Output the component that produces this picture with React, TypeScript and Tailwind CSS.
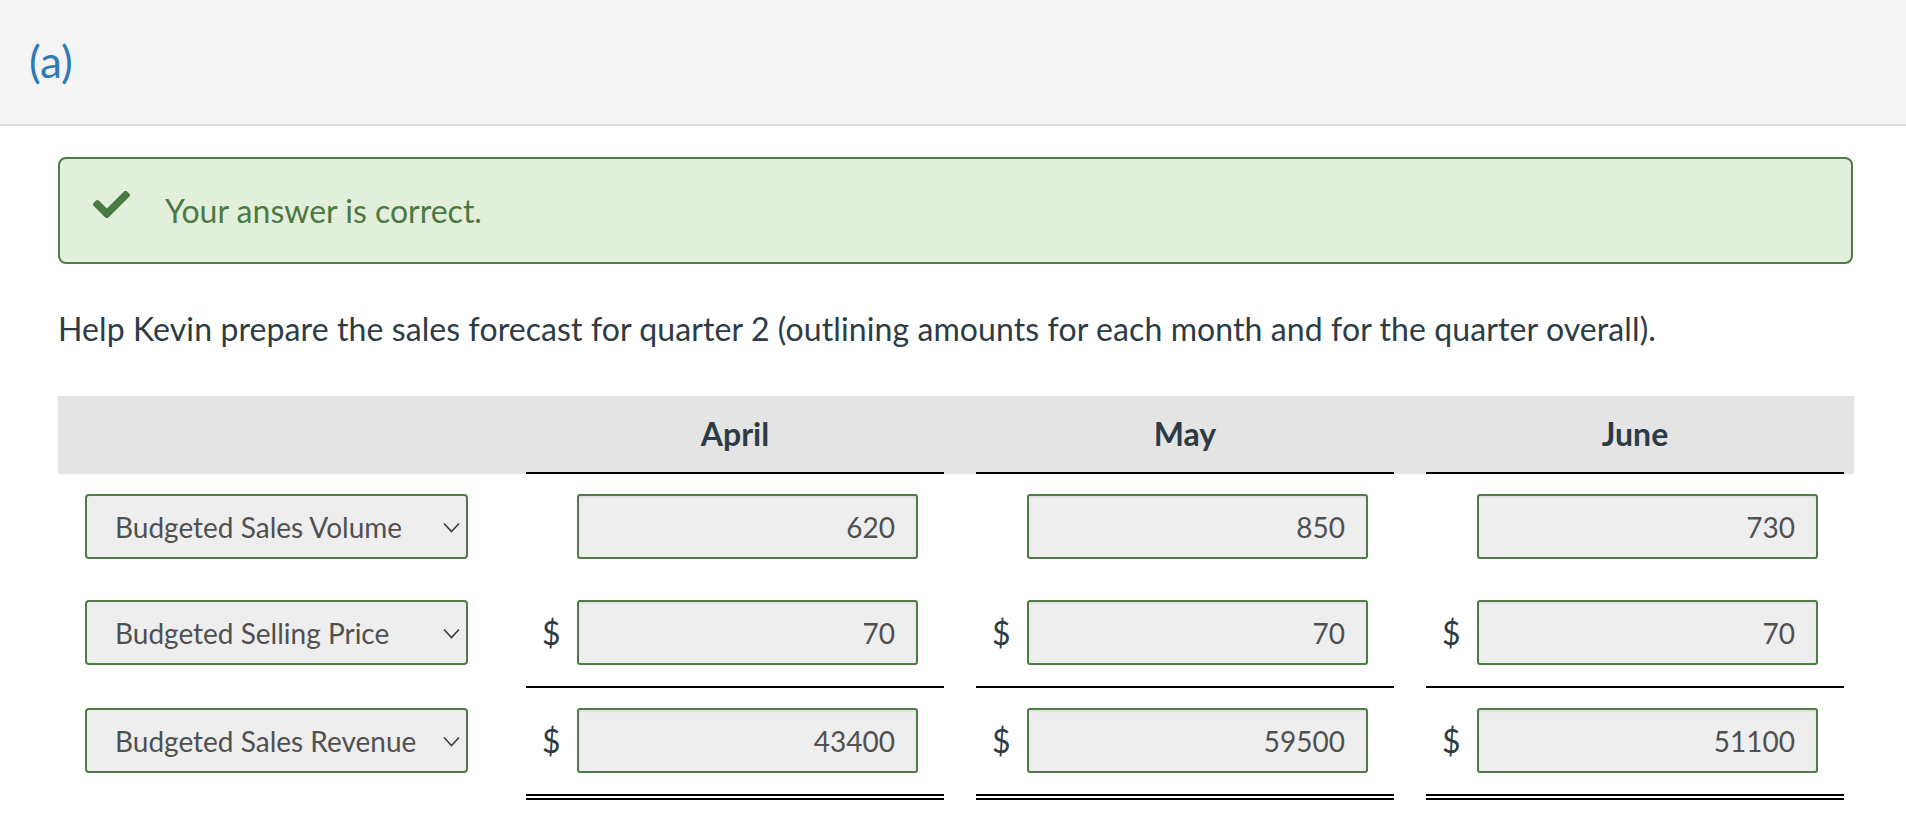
import React from 'react';

type Row = {
  label: string;
  values: string[];
  dollar: boolean;
  rule: 'none' | 'single' | 'double';
};

const rows: Row[] = [
  { label: 'Budgeted Sales Volume', values: ['620', '850', '730'], dollar: false, rule: 'none' },
  { label: 'Budgeted Selling Price', values: ['70', '70', '70'], dollar: true, rule: 'single' },
  { label: 'Budgeted Sales Revenue', values: ['43400', '59500', '51100'], dollar: true, rule: 'double' },
];

const months = ['April', 'May', 'June'];

const CheckIcon = () => (
  <svg width="37" height="27" viewBox="0 72 512 368" className="shrink-0 mb-[12px]" fill="#4a7a43">
    <path d="M173.898 439.404l-166.4-166.4c-9.997-9.997-9.997-26.206 0-36.204l36.203-36.204c9.997-9.998 26.207-9.998 36.204 0L192 312.69 432.095 72.596c9.997-9.997 26.207-9.997 36.204 0l36.203 36.204c9.997 9.997 9.997 26.206 0 36.204l-294.4 294.401c-9.998 9.997-26.207 9.997-36.204-.001z" />
  </svg>
);

const Chevron = () => (
  <svg width="17" height="11" viewBox="0 0 17 11" fill="none" stroke="#3a3a3a" strokeWidth="1.6">
    <path d="M1 1.5l7.5 8 7.5-8" />
  </svg>
);

const SelectBox = ({ label }: { label: string }) => (
  <div className="relative w-[383px] h-[65px]">
    <select
      defaultValue={label}
      className="appearance-none w-full h-full bg-[#eeeeee] border-2 border-[#4e7b46] rounded-[4px] pl-[28px] pr-[36px] text-[28px] text-[#505050] outline-none"
    >
      <option>{label}</option>
    </select>
    <div className="pointer-events-none absolute right-[8px] top-[28px]">
      <Chevron />
    </div>
  </div>
);

const AmountInput = ({ value }: { value: string }) => (
  <input
    readOnly
    value={value}
    className="w-[341px] h-[65px] bg-[#eeeeee] border-2 border-[#4e7b46] rounded-[3px] pr-[21px] text-right text-[28px] text-[#505050] shadow-[inset_0_2px_2px_rgba(0,0,0,0.06)] outline-none"
  />
);

export default function App() {
  return (
    <div className="min-h-screen bg-white font-[Lato,sans-serif] text-[#2d3b45]">
      <div className="h-[126px] bg-[#f4f4f4] border-b-2 border-[#dcdcdc] flex items-center px-[29px]">
        <span className="text-[44px] text-[#2c7bb6] leading-none mb-[3px]">(a)</span>
      </div>

      <div className="px-[58px] w-[1912px]">
        <div className="mt-[31px] h-[107px] w-[1795px] bg-[#e2efdb] border-2 border-[#4e7b46] rounded-[8px] flex items-center pl-[33px]">
          <CheckIcon />
          <span className="ml-[35px] text-[32px] text-[#4a7a43]">Your answer is correct.</span>
        </div>

        <p className="mt-[46px] text-[32px] leading-[38px] tracking-[0.1px]">
          Help Kevin prepare the sales forecast for quarter 2 (outlining amounts for each month and for the quarter overall).
        </p>

        <div className="mt-[48px] w-[1796px]">
          <div className="bg-[#e4e4e4] h-[78px] grid grid-cols-[436px_418px_418px_418px] gap-x-[32px]">
            <div />
            {months.map((m) => (
              <div key={m} className="border-b-2 border-black flex items-center justify-center text-[32px] font-bold">
                {m}
              </div>
            ))}
          </div>

          {rows.map((row) => (
            <div key={row.label} className="grid grid-cols-[436px_418px_418px_418px] gap-x-[32px]">
              <div className="pt-[20px] pb-[21px] pl-[27px]">
                <SelectBox label={row.label} />
              </div>
              {row.values.map((v, i) => (
                <div
                  key={i}
                  className={
                    'flex items-center pt-[20px] pb-[21px] pl-[16px] ' +
                    (row.rule === 'single'
                      ? 'border-b-2 border-black'
                      : row.rule === 'double'
                      ? 'border-b-[6px] border-double border-black'
                      : '')
                  }
                >
                  <span className="w-[35px] text-[32px]">{row.dollar ? '$' : ''}</span>
                  <AmountInput value={v} />
                </div>
              ))}
            </div>
          ))}
        </div>
      </div>
    </div>
  );
}
